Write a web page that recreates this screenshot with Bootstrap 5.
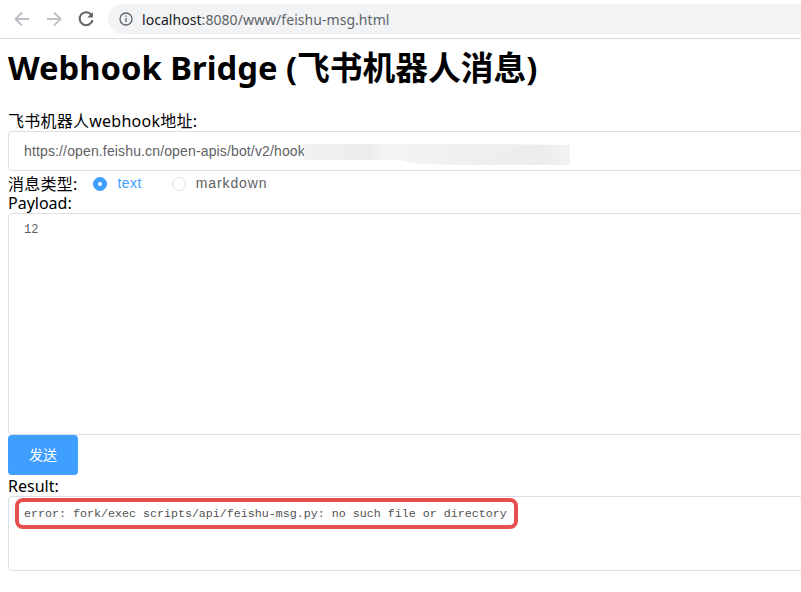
<!DOCTYPE html>
<html>

<head>
  <title>Webhook Bridge</title>
  <link href="https://cdn.jsdelivr.net/npm/bootstrap@5.3.0/dist/css/bootstrap.min.css" rel="stylesheet">
  <style>
    body {
      font-family: "Liberation Sans", "Noto Sans CJK SC", sans-serif;
      color: #000;
      overflow: hidden;
    }

    .browser-bar {
      height: 39px;
      border-bottom: 1px solid #dadce0;
      padding: 4px 0 4px 13px;
    }

    .nav-icon {
      width: 18px;
      height: 18px;
      margin-right: 14px;
      flex: none;
    }

    .url-pill {
      flex: 1;
      height: 30px;
      margin-left: -1px;
      padding-left: 11px;
      background-color: #f1f3f4;
      border-radius: 15px 0 0 15px;
      font-family: "Noto Sans", sans-serif;
      font-size: 14px;
      letter-spacing: .05px;
      color: #5f6368;
    }

    .url-icon {
      margin-right: 9px;
      flex: none;
    }

    .url-host {
      color: #202124;
    }

    .page-body {
      padding: 0 0 0 8px;
      margin-right: -20px;
    }

    .page-title {
      font-family: "Noto Sans", "Noto Sans CJK SC", sans-serif;
      font-size: 32.75px;
      font-weight: 700;
      line-height: 48px;
      margin: 5px 0 19px;
    }

    .field-label {
      display: block;
      font-family: "Noto Sans", "Noto Sans CJK SC", sans-serif;
      font-size: 16px;
      line-height: 20px;
      height: 20px;
      margin: 0;
    }

    .cjk-label {
      letter-spacing: .25px;
    }

    .url-field {
      position: relative;
    }

    .hook-input {
      height: 40px;
      padding: 0 15px;
      border: 1px solid #dcdfe6;
      border-radius: 4px;
      font-size: 14px;
      letter-spacing: .14px;
      color: #606266;
    }

    .blur-patch {
      position: absolute;
      left: 296px;
      top: 12px;
      width: 266px;
      height: 22px;
      background: linear-gradient(90deg, #f1f1f1, #ececec 25%, #f4f4f4 30%, #eff0ef 60%, #ececec 90%, #f3f3f3);
      clip-path: polygon(0 1px, 190px 1px, 266px 2px, 266px 22px, 155px 22px, 115px 21px, 95px 17px, 0 17px);
    }

    .type-row {
      height: 22px;
      padding-top: 3px;
    }

    .type-row .field-label {
      line-height: 18px;
      height: 18px;
      margin-right: 15px;
    }

    .radio-dot {
      width: 14px;
      height: 14px;
      border: 1px solid #dcdfe6;
      border-radius: 50%;
      margin-right: 10px;
      flex: none;
    }

    .radio-dot.is-on {
      background-color: #409eff;
      border-color: #409eff;
      display: flex;
      align-items: center;
      justify-content: center;
    }

    .radio-dot.is-on::after {
      content: "";
      width: 4px;
      height: 4px;
      border-radius: 50%;
      background-color: #fff;
    }

    .radio-text {
      font-size: 14px;
      color: #606266;
      margin-right: 28px;
      letter-spacing: .9px;
    }

    .radio-text.is-on {
      margin-left: 1px;
      margin-right: 30px;
      letter-spacing: .4px;
      color: #409eff;
    }

    .payload-box {
      height: 222px;
      padding: 6px 15px;
      border: 1px solid #dcdfe6;
      border-radius: 4px;
      font-family: "Liberation Mono", monospace;
      font-size: 12px;
      line-height: 21px;
      color: #606266;
      resize: none;
    }

    .send-btn {
      display: block;
      width: 70px;
      height: 40px;
      padding: 0;
      background-color: #409eff;
      border: 0;
      border-radius: 4px;
      color: #fff;
      font-size: 14px;
    }

    .result-label {
      margin-top: 1px;
    }

    .result-box {
      position: relative;
      height: 75px;
      padding: 7px 15px;
      border: 1px solid #dcdfe6;
      border-radius: 4px;
      font-family: "Liberation Mono", "Noto Sans CJK SC", monospace;
      font-size: 11.67px;
      line-height: 21px;
      color: #505256;
    }

    .red-mark {
      position: absolute;
      left: 6px;
      top: 1px;
      width: 503px;
      height: 31px;
      border: 4px solid #e5504f;
      border-radius: 8px;
    }
  </style>
</head>

<body>
  <div class="browser-bar d-flex align-items-center">
    <svg class="nav-icon" viewBox="0 0 18 18" fill="none" stroke="#bdc1c6" stroke-width="2"><path d="M16 9H3M9 2.500 2.500 9 9 15.500"/></svg>
    <svg class="nav-icon" viewBox="0 0 18 18" fill="none" stroke="#bdc1c6" stroke-width="2"><path d="M2 9h13M9 2.500 15.500 9 9 15.500"/></svg>
    <svg class="nav-icon" viewBox="0 0 18 18" fill="none" stroke="#5f6368" stroke-width="2"><path d="M14.500 5A6.500 6.500 0 1 0 15.500 10"/><path d="M15.800 2v5.500h-5.500z" fill="#5f6368" stroke="none"/></svg>
    <div class="url-pill d-flex align-items-center">
      <svg class="url-icon" width="14" height="14" viewBox="0 0 14 14" fill="none" stroke="#5f6368" stroke-width="1.300"><circle cx="7" cy="7" r="6"/><path d="M7 6v4.200M7 3.500v1.300"/></svg>
      <span><span class="url-host">localhost</span>:8080/www/feishu-msg.html</span>
    </div>
  </div>

  <div class="page-body">
    <h1 class="page-title">Webhook Bridge (飞书机器人消息)</h1>

    <label class="field-label cjk-label">飞书机器人webhook地址:</label>
    <div class="url-field">
      <input class="form-control hook-input" type="text" value="https://open.feishu.cn/open-apis/bot/v2/hook">
      <div class="blur-patch"></div>
    </div>

    <div class="type-row d-flex align-items-center">
      <span class="field-label cjk-label">消息类型:</span>
      <span class="radio-dot is-on"></span><span class="radio-text is-on">text</span>
      <span class="radio-dot"></span><span class="radio-text">markdown</span>
    </div>

    <label class="field-label">Payload:</label>
    <textarea class="form-control payload-box">12</textarea>

    <button class="btn send-btn" type="button">发送</button>

    <label class="field-label result-label">Result:</label>
    <div class="result-box">error: fork/exec scripts/api/feishu-msg.py: no such file or directory
      <div class="red-mark"></div>
    </div>
  </div>
</body>

</html>
